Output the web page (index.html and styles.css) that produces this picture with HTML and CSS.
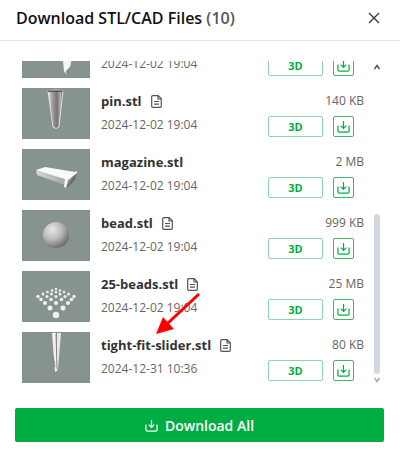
FILE: index.html
```html
<!DOCTYPE html>
<html lang="en">
<head>
    <meta charset="UTF-8">
    <meta name="viewport" content="width=device-width, initial-scale=1.0">
    <title>Download STL/CAD Files</title>
    <link rel="stylesheet" href="styles.css">
</head>
<body>
    <!-- Shared icons and shading -->
    <svg class="sprite" aria-hidden="true">
        <defs>
            <linearGradient id="metal">
                <stop offset="0" stop-color="#f5f5f5"/>
                <stop offset="0.25" stop-color="#a5a5a5"/>
                <stop offset="0.6" stop-color="#747474"/>
                <stop offset="0.85" stop-color="#b5b5b5"/>
                <stop offset="1" stop-color="#555"/>
            </linearGradient>
            <radialGradient id="ball" cx="0.35" cy="0.3" r="0.75">
                <stop offset="0" stop-color="#e6e4e4"/>
                <stop offset="0.5" stop-color="#bcbaba"/>
                <stop offset="1" stop-color="#686666"/>
            </radialGradient>
            <linearGradient id="side">
                <stop offset="0" stop-color="#d5d5d5"/>
                <stop offset="1" stop-color="#a8a8a8"/>
            </linearGradient>
        </defs>
        <symbol id="icon-download" viewBox="0 0 14 14">
            <path d="M7 1v8M4 6l3 3 3-3M1 6v5.500a1.500 1.500 0 0 0 1.500 1.500h9a1.500 1.500 0 0 0 1.500-1.500V6" fill="none" stroke="currentColor" stroke-width="1.300"/>
        </symbol>
        <symbol id="icon-doc" viewBox="0 0 11 13">
            <path d="M1.600 .7h5.600l3.100 3.100v7.500a1 1 0 0 1-1 1H1.700a1 1 0 0 1-1-1V1.600a.9.900 0 0 1 .9-.9zM7 .8V4h3.200M3 6.500h5M3 9.200h5" fill="none" stroke="currentColor" stroke-width="1.200"/>
        </symbol>
    </svg>

    <header class="header">
        <h1 class="title">Download STL/CAD Files <span class="count">(10)</span></h1>
        <button class="close" type="button" aria-label="Close">
            <svg width="12" height="12" viewBox="0 0 12 12"><path d="M1 1l10 10M11 1L1 11" stroke="#333" stroke-width="1.300"/></svg>
        </button>
    </header>

    <main class="content">
        <ul class="file-list">
            <li class="file">
                <svg class="thumb" viewBox="0 0 68 51"><path d="M40 26l2 18q2 5 5 1l4-19z" fill="#f4f4f4"/><path d="M44 44l5-5-1 5q-2 4-4 2z" fill="#888"/></svg>
                <div class="info">
                    <div class="name"></div>
                    <div class="date">2024-12-02 19:04</div>
                </div>
                <div class="side">
                    <div class="size"></div>
                    <div class="actions">
                        <button class="view" type="button">3D</button>
                        <button class="get" type="button" aria-label="Download"><svg width="13" height="13"><use href="#icon-download"/></svg></button>
                    </div>
                </div>
            </li>
            <li class="file">
                <svg class="thumb" viewBox="0 0 68 51"><path d="M26 3q7-2 15 0l-4 36q-3 3-6 0z" fill="url(#metal)" stroke="#eee" stroke-width=".8"/><path d="M26 2.500h14.500v1.500H26z" fill="#555"/></svg>
                <div class="info">
                    <div class="name">pin.stl <svg class="doc" width="11" height="13"><use href="#icon-doc"/></svg></div>
                    <div class="date">2024-12-02 19:04</div>
                </div>
                <div class="side">
                    <div class="size">140 KB</div>
                    <div class="actions">
                        <button class="view" type="button">3D</button>
                        <button class="get" type="button" aria-label="Download pin.stl"><svg width="13" height="13"><use href="#icon-download"/></svg></button>
                    </div>
                </div>
            </li>
            <li class="file">
                <svg class="thumb" viewBox="0 0 68 51"><path d="M45 37l10-14-2 8-7 7-3 1z" fill="#6b6b6b"/><path d="M14 21l29 7v8l-28-10z" fill="url(#side)"/><path d="M14 21l9-3 30 5 2-1v2l-9 7-2 8-2-1 1-8z" fill="#fafafa"/></svg>
                <div class="info">
                    <div class="name">magazine.stl</div>
                    <div class="date">2024-12-02 19:04</div>
                </div>
                <div class="side">
                    <div class="size">2 MB</div>
                    <div class="actions">
                        <button class="view" type="button">3D</button>
                        <button class="get" type="button" aria-label="Download magazine.stl"><svg width="13" height="13"><use href="#icon-download"/></svg></button>
                    </div>
                </div>
            </li>
            <li class="file">
                <svg class="thumb" viewBox="0 0 68 51"><circle cx="34" cy="25" r="13" fill="url(#ball)"/></svg>
                <div class="info">
                    <div class="name">bead.stl <svg class="doc" width="11" height="13"><use href="#icon-doc"/></svg></div>
                    <div class="date">2024-12-02 19:04</div>
                </div>
                <div class="side">
                    <div class="size">999 KB</div>
                    <div class="actions">
                        <button class="view" type="button">3D</button>
                        <button class="get" type="button" aria-label="Download bead.stl"><svg width="13" height="13"><use href="#icon-download"/></svg></button>
                    </div>
                </div>
            </li>
            <li class="file">
                <svg class="thumb" viewBox="0 0 68 51">
                    <g fill="#f0f0f0">
                        <circle cx="34" cy="18" r="1.200"/><circle cx="38" cy="19.500" r="1.300"/><circle cx="42" cy="21" r="1.300"/><circle cx="46.500" cy="23" r="1.500"/><circle cx="52" cy="25.500" r="1.700"/>
                        <circle cx="30" cy="19.500" r="1.300"/><circle cx="34" cy="21" r="1.300"/><circle cx="38" cy="23" r="1.500"/><circle cx="43" cy="25.500" r="1.600"/><circle cx="49.500" cy="28.500" r="1.800"/>
                        <circle cx="25.500" cy="21" r="1.300"/><circle cx="29.500" cy="23" r="1.500"/><circle cx="34" cy="25.500" r="1.600"/><circle cx="39.500" cy="28.500" r="1.800"/><circle cx="46" cy="32" r="2.100"/>
                        <circle cx="21" cy="23" r="1.500"/><circle cx="25" cy="25.500" r="1.600"/><circle cx="29" cy="28.500" r="1.800"/><circle cx="34" cy="32" r="2.100"/><circle cx="41" cy="37" r="2.500"/>
                        <circle cx="16" cy="25.500" r="1.700"/><circle cx="19" cy="28.500" r="1.800"/><circle cx="23" cy="32" r="2.100"/><circle cx="28" cy="37" r="2.500"/><circle cx="34" cy="44" r="3.200"/>
                    </g>
                </svg>
                <div class="info">
                    <div class="name">25-beads.stl <svg class="doc" width="11" height="13"><use href="#icon-doc"/></svg></div>
                    <div class="date">2024-12-02 19:04</div>
                </div>
                <div class="side">
                    <div class="size">25 MB</div>
                    <div class="actions">
                        <button class="view" type="button">3D</button>
                        <button class="get" type="button" aria-label="Download 25-beads.stl"><svg width="13" height="13"><use href="#icon-download"/></svg></button>
                    </div>
                </div>
            </li>
            <li class="file">
                <svg class="thumb" viewBox="0 0 68 51"><path d="M30 1h4l1 38-2 1z" fill="#f2f2f2"/><path d="M35 1h4l-3 36-1 1z" fill="#e9e9e9"/><path d="M34 2l1 35" stroke="#777" stroke-width=".8"/><path d="M31 24l2 11" stroke="#777" stroke-width=".8"/></svg>
                <div class="info">
                    <div class="name">tight-fit-slider.stl <svg class="doc" width="11" height="13"><use href="#icon-doc"/></svg></div>
                    <div class="date">2024-12-31 10:36</div>
                </div>
                <div class="side">
                    <div class="size">80 KB</div>
                    <div class="actions">
                        <button class="view" type="button">3D</button>
                        <button class="get" type="button" aria-label="Download tight-fit-slider.stl"><svg width="13" height="13"><use href="#icon-download"/></svg></button>
                    </div>
                </div>
            </li>
        </ul>

        <div class="scrollbar" aria-hidden="true">
            <svg width="8" height="6" viewBox="0 0 8 6"><path d="M1.500 5L4 1.500 6.500 5" fill="none" stroke="#555" stroke-width="1.500"/></svg>
            <div class="track"><div class="handle"></div></div>
            <svg width="8" height="6" viewBox="0 0 8 6"><path d="M1.500 1L4 4.500 6.500 1" fill="none" stroke="#aaa" stroke-width="1.500"/></svg>
        </div>

        <!-- Arrow pointing at the newest file -->
        <svg class="pointer" width="46" height="44" viewBox="0 0 46 44" aria-hidden="true">
            <path d="M43 2L12 31" stroke="#f00" stroke-width="3"/>
            <path d="M0 42L7 25l11 12z" fill="#f00"/>
        </svg>
    </main>

    <footer class="footer">
        <button class="download-all" type="button">
            <svg width="13" height="13"><use href="#icon-download"/></svg>
            Download All
        </button>
    </footer>
</body>
</html>
```

FILE: styles.css
```css
/* Reset and Base Styles */
* {
    box-sizing: border-box;
}

body {
    margin: 0;
    height: 100vh;
    display: flex;
    flex-direction: column;
    font-family: 'Open Sans', 'Noto Sans', sans-serif;
    font-size: 12px;
    color: #333;
    background: #fff;
}

button {
    margin: 0;
    padding: 0;
    font-family: inherit;
    cursor: pointer;
}

svg {
    display: block;
    flex: none;
}

.sprite {
    position: absolute;
    width: 0;
    height: 0;
}

/* Header */
.header {
    display: flex;
    align-items: center;
    justify-content: space-between;
    padding: 6px 20px 10px 16px;
    border-bottom: 1px solid #e6e6e6;
}

.title {
    margin: 0;
    font-size: 16px;
    line-height: 24px;
    font-weight: 600;
    color: #111;
}

.count {
    color: #555;
}

.close {
    display: flex;
    border: 0;
    background: none;
}

/* File list */
.content {
    position: relative;
    flex: 1;
    min-height: 0;
    display: flex;
    gap: 9px;
    margin-top: 20px;
    padding: 0 19px 0 22px;
    overflow: hidden;
}

.file-list {
    flex: 1;
    display: flex;
    flex-direction: column;
    justify-content: flex-end;
    gap: 10px;
    margin: 0;
    padding: 0;
    list-style: none;
}

.file {
    display: flex;
    flex: none;
    gap: 11px;
    height: 51px;
}

.thumb {
    width: 68px;
    height: 51px;
    background: #87938f;
}

.info {
    flex: 1;
}

.name {
    display: flex;
    align-items: center;
    gap: 9px;
    height: 26px;
    font-size: 13px;
    font-weight: 700;
}

.doc {
    color: #555;
}

.date {
    line-height: 22px;
    color: #666;
}

.size {
    height: 28px;
    line-height: 26px;
    text-align: right;
    color: #666;
}

.actions {
    display: flex;
    gap: 10px;
    padding-right: 10px;
}

.view,
.get {
    display: flex;
    align-items: center;
    justify-content: center;
    height: 21px;
    border: 1px solid #8fd6a7;
    border-radius: 2px;
    background: #fff;
    color: #00ad42;
}

.view {
    width: 55px;
    font-size: 11px;
    font-weight: 700;
}

.get {
    width: 21px;
    border-color: #3db868;
}

/* Scrollbar */
.scrollbar {
    display: flex;
    flex-direction: column;
    align-items: center;
    width: 8px;
    padding-top: 3px;
}

.track {
    flex: 1;
    display: flex;
    align-items: flex-end;
    padding: 3px 0;
}

.handle {
    width: 6px;
    height: 53%;
    border-radius: 3px;
    background: #d1d8df;
}

.pointer {
    position: absolute;
    left: 156px;
    bottom: 47px;
}

/* Footer */
.footer {
    padding: 25px 16px 15px 15px;
}

.download-all {
    display: flex;
    align-items: center;
    justify-content: center;
    gap: 7px;
    width: 100%;
    height: 34px;
    border: 0;
    border-radius: 2px;
    background: #00ad42;
    color: #fff;
    font-size: 14px;
    font-weight: 600;
}
```
